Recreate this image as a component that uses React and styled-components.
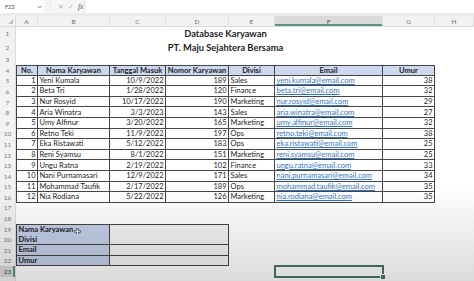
import React from 'react';
import styled, { createGlobalStyle, css } from 'styled-components';

const GlobalStyle = createGlobalStyle`
  html, body {
    margin: 0;
    padding: 0;
    background: #fff;
  }
  body {
    font-family: Lato, "Liberation Sans", sans-serif;
  }
`;

const COLUMNS = '16px 22px 72px 56px 63px 46px 108px 52px 1fr';
const LETTERS = ['A', 'B', 'C', 'D', 'E', 'F', 'G', 'H'];
const ROW_H = 10.6;
const TITLE_H = 13.7;
const BORDER = '#454545';

const employees = [
  [1, 'Yeni Kumala', '10/9/2022', 189, 'Sales', 'yeni.kumala@email.com', 38],
  [2, 'Beta Tri', '1/28/2022', 120, 'Finance', 'beta.tri@email.com', 32],
  [3, 'Nur Rosyid', '10/17/2022', 190, 'Marketing', 'nur.rosyid@email.com', 29],
  [4, 'Aria Winatra', '3/3/2023', 143, 'Sales', 'aria.winatra@email.com', 27],
  [5, 'Umy Alfinur', '3/20/2022', 165, 'Marketing', 'umy.alfinur@email.com', 32],
  [6, 'Retno Teki', '11/9/2022', 197, 'Ops', 'retno.teki@email.com', 38],
  [7, 'Eka Ristawati', '5/12/2022', 183, 'Ops', 'eka.ristawati@email.com', 25],
  [8, 'Reni Syamsu', '8/1/2022', 151, 'Marketing', 'reni.syamsu@email.com', 25],
  [9, 'Ungu Ratna', '2/19/2022', 102, 'Finance', 'ungu.ratna@email.com', 33],
  [10, 'Nani Purnamasari', '12/9/2022', 171, 'Sales', 'nani.purnamasari@email.com', 34],
  [11, 'Mohammad Taufik', '2/17/2022', 189, 'Ops', 'mohammad.taufik@email.com', 35],
  [12, 'Nia Rodiana', '5/22/2022', 126, 'Marketing', 'nia.rodiana@email.com', 35],
];

const headers = ['No.', 'Nama Karyawan', 'Tanggal Masuk', 'Nomor Karyawan', 'Divisi', 'Email', 'Umur'];
const lookupLabels = ['Nama Karyawan', 'Divisi', 'Email', 'Umur'];

const Screen = styled.div`
  position: relative;
  width: 474px;
  height: 281px;
  overflow: hidden;
  display: flex;
  flex-direction: column;
  background: #fff;

  &::after {
    content: '';
    position: absolute;
    inset: 0;
    pointer-events: none;
    background: linear-gradient(to bottom, rgba(0, 0, 0, 0) 66%, rgba(0, 0, 0, 0.14) 100%);
  }
`;

const FormulaBar = styled.div`
  display: flex;
  height: 13px;
  flex-shrink: 0;
  background: #f6f6f6;
  border-bottom: 3px solid #ebebeb;
`;

const NameBox = styled.div`
  width: 44px;
  box-sizing: border-box;
  display: flex;
  align-items: center;
  justify-content: space-between;
  padding: 0 2px 0 5px;
  font-size: 5.5px;
  color: #444;
  background: #fff;
`;

const FxTools = styled.div`
  width: 40px;
  box-sizing: border-box;
  display: flex;
  align-items: center;
  gap: 4px;
  padding-left: 3px;
  color: #b4b4b4;
  font-size: 7px;

  em {
    font-family: "Liberation Serif", serif;
    color: #555;
    font-size: 7.5px;
  }
`;

const FormulaInput = styled.div`
  flex: 1;
  background: #fff;
  border-left: 1px solid #e3e3e3;
`;

const HeaderRow = styled.div`
  display: grid;
  grid-template-columns: ${COLUMNS};
  height: 11px;
  flex-shrink: 0;
  background: #f2f2f2;
  border-bottom: 1px solid #dcdcdc;
  box-sizing: border-box;
`;

const Corner = styled.div`
  display: flex;
  align-items: flex-end;
  justify-content: flex-end;
  padding: 0 2px 2px 0;
  border-right: 1px solid #dcdcdc;
`;

const ColumnLetter = styled.div`
  display: flex;
  align-items: center;
  justify-content: center;
  font-size: 6.5px;
  color: #707070;
  border-right: 1px solid #e0e0e0;

  ${({ $active }) =>
    $active &&
    css`
      background: #dadada;
      color: #2f6447;
      box-shadow: inset 0 -2px 0 #5a977a;
    `}
`;

const SheetRow = styled.div`
  display: grid;
  grid-template-columns: ${COLUMNS};
  height: ${({ $h }) => $h}px;
  flex-shrink: 0;
`;

const RowHead = styled.div`
  display: flex;
  align-items: center;
  justify-content: center;
  font-size: 6.5px;
  color: #7a7a7a;
  background: #f2f2f2;
  border-right: 1px solid #dcdcdc;

  ${({ $active }) =>
    $active &&
    css`
      background: #dadada;
      color: #2f6447;
      box-shadow: inset -2px 0 0 #5a977a;
    `}
`;

const fills = {
  head: '#cdd8ee',
  label: '#c3cee6',
  value: '#f3f3f3',
};

const Cell = styled.div`
  position: relative;
  min-width: 0;
  box-sizing: border-box;
  display: flex;
  align-items: center;
  justify-content: ${({ $align }) =>
    $align === 'right' ? 'flex-end' : $align === 'center' ? 'center' : 'flex-start'};
  padding: 0 1.5px;
  font-size: ${({ $size }) => $size || 7.5}px;
  font-weight: ${({ $bold }) => ($bold ? 700 : 400)};
  color: #1d1d1d;
  white-space: nowrap;
  grid-column: span ${({ $span }) => $span || 1};
  background: ${({ $fill }) => fills[$fill] || 'transparent'};

  ${({ $bordered }) =>
    $bordered &&
    css`
      border-right: 1px solid ${BORDER};
      border-bottom: 1px solid ${BORDER};
    `}
  ${({ $first }) => $first && `border-left: 1px solid ${BORDER};`}
  ${({ $top }) => $top && `border-top: 1px solid ${BORDER};`}

  ${({ $selected }) =>
    $selected &&
    css`
      outline: 2px solid #4b7561;
      outline-offset: -1px;

      &::after {
        content: '';
        position: absolute;
        right: -3px;
        bottom: -3px;
        width: 4px;
        height: 4px;
        background: #4b7561;
        border: 1px solid #fff;
      }
    `}
`;

const EmailLink = styled.span`
  color: #3574bf;
  text-decoration: underline;
  text-decoration-thickness: 0.5px;
  text-underline-offset: 1px;
`;

const CellCursor = () => (
  <svg width="7" height="7" viewBox="0 0 8 8" style={{ marginLeft: 0.5, marginTop: 3 }}>
    <path
      d="M3 0.5h2v2.5h2.5v2H5v2.5H3V5H0.5V3H3z"
      fill="#fff"
      stroke="#333"
      strokeWidth="0.8"
    />
  </svg>
);

const NameArrow = () => (
  <svg width="5" height="4" viewBox="0 0 5 4">
    <path d="M0.5 1l2 2 2-2" fill="none" stroke="#666" strokeWidth="0.8" />
  </svg>
);

const CornerMark = () => (
  <svg width="5" height="5" viewBox="0 0 5 5">
    <path d="M5 0v5H0z" fill="#c4c4c4" />
  </svg>
);

const Row = ({ n, h = ROW_H, active, children }) => (
  <SheetRow $h={h}>
    <RowHead $active={active}>{n}</RowHead>
    {children}
  </SheetRow>
);

export default function App() {
  return (
    <>
      <GlobalStyle />
      <Screen>
        <FormulaBar>
          <NameBox>
            <span>F23</span>
            <NameArrow />
          </NameBox>
          <FxTools>
            <span style={{ color: '#ccc' }}>⋮</span>
            <span>✕</span>
            <span>✓</span>
            <em>fx</em>
          </FxTools>
          <FormulaInput />
        </FormulaBar>

        <HeaderRow>
          <Corner>
            <CornerMark />
          </Corner>
          {LETTERS.map(l => (
            <ColumnLetter key={l} $active={l === 'F'}>
              {l}
            </ColumnLetter>
          ))}
        </HeaderRow>

        <Row n={1} h={TITLE_H}>
          <Cell $span={7} $align="center" $bold $size={9.3}>
            Database Karyawan
          </Cell>
        </Row>
        <Row n={2} h={TITLE_H}>
          <Cell $span={7} $align="center" $bold $size={9.3}>
            PT. Maju Sejahtera Bersama
          </Cell>
        </Row>
        <Row n={3} />

        <Row n={4}>
          {headers.map((title, i) => (
            <Cell key={title} $bordered $top $first={i === 0} $fill="head" $bold $align="center">
              {title}
            </Cell>
          ))}
        </Row>

        {employees.map(([no, name, date, id, div, email, age], i) => (
          <Row key={no} n={i + 5}>
            <Cell $bordered $first $align="right">{no}</Cell>
            <Cell $bordered>{name}</Cell>
            <Cell $bordered $align="right">{date}</Cell>
            <Cell $bordered $align="right">{id}</Cell>
            <Cell $bordered>{div}</Cell>
            <Cell $bordered>
              <EmailLink>{email}</EmailLink>
            </Cell>
            <Cell $bordered $align="right">{age}</Cell>
          </Row>
        ))}

        <Row n={17} />
        <Row n={18} />

        {lookupLabels.map((label, i) => (
          <Row key={label} n={19 + i}>
            <Cell $span={2} $bordered $first $top={i === 0} $fill="label" $bold>
              {label}
              {i === 0 && <CellCursor />}
            </Cell>
            <Cell $span={2} $bordered $top={i === 0} $fill="value" />
          </Row>
        ))}

        <Row n={23} active>
          <Cell $span={5} />
          <Cell $selected />
        </Row>
        <Row n="" />
      </Screen>
    </>
  );
}
